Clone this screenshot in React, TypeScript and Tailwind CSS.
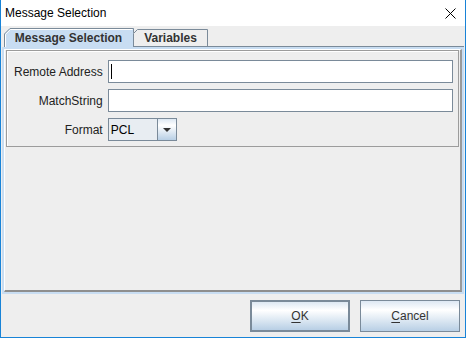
/* Java Swing style "Message Selection" dialog */

function CloseIcon() {
  return (
    <svg width="11" height="11" viewBox="0 0 11 11" className="block">
      <path d="M0.5 0.5 L10.5 10.5 M10.5 0.5 L0.5 10.5" stroke="#000" strokeWidth="1" />
    </svg>
  );
}

function SelectedTab({ label }: { label: string }) {
  return (
    <div className="relative w-[130px] h-[19px] flex items-center justify-center font-bold text-[#333333]">
      <svg width="130" height="19" className="absolute inset-0">
        <polygon points="0,19 0,6 6,0 130,0 130,19" fill="#c8ddf2" />
        <polyline points="0.5,19 0.5,6 6,0.5 129.5,0.5 129.5,19" fill="none" stroke="#7a8a99" />
        <polyline points="1.5,19 1.5,6.4 6.4,1.5 128.5,1.5" fill="none" stroke="#ffffff" />
      </svg>
      <span className="relative pr-[1px]">{label}</span>
    </div>
  );
}

function Tab({ label }: { label: string }) {
  return (
    <div className="relative w-[75px] h-[18px] -ml-px flex items-center justify-center font-bold text-[#333333]">
      <svg width="75" height="18" className="absolute inset-0">
        <polygon points="0,18 0,4.5 4.5,0 75,0 75,18" fill="#eeeeee" />
        <polyline points="0.5,18 0.5,4.5 4.5,0.5 74.5,0.5 74.5,18" fill="none" stroke="#7a8a99" />
        <line x1="0" y1="17.5" x2="75" y2="17.5" stroke="#7a8a99" />
      </svg>
      <span className="relative">{label}</span>
    </div>
  );
}

function TextField({ caret }: { caret?: boolean }) {
  return (
    <div className="h-[23px] bg-white border border-[#7a8a99] flex items-center pl-[2px]">
      {caret && <div className="w-px h-[15px] bg-black" />}
    </div>
  );
}

function Combo({ value }: { value: string }) {
  return (
    <div className="w-[69px] h-[23px] flex border border-[#7a8a99] justify-self-start">
      <div className="flex-1 flex items-center pl-[2px] bg-[#e8edf2] text-black">{value}</div>
      <div className="w-[19px] flex items-center justify-center border-l border-[#7a8a99] bg-[linear-gradient(to_bottom,#dde8f3_0%,#ffffff_30%,#b8cfe5_100%)]">
        <svg width="8" height="4" viewBox="0 0 8 4" className="block">
          <polygon points="0,0 8,0 4,4" fill="#333333" />
        </svg>
      </div>
    </div>
  );
}

function Button({ first, rest, focused }: { first: string; rest: string; focused?: boolean }) {
  return (
    <button
      className={`w-[100px] h-[32px] flex items-center justify-center text-[#333333] bg-[linear-gradient(to_bottom,#dde8f3_0%,#ffffff_30%,#b8cfe5_100%)] ${
        focused ? "border-2 border-[#7a8a99]" : "border border-[#7a8a99]"
      }`}
    >
      <span>
        <span className="underline underline-offset-2">{first}</span>
        {rest}
      </span>
    </button>
  );
}

export default function App() {
  return (
    <div className="w-[466px] h-[338px] flex flex-col border-x border-b border-[#1883d7] bg-[#eeeeee] font-['Liberation_Sans',Arial,sans-serif] text-[12px] leading-none">
      {/* title bar */}
      <div className="h-[26px] shrink-0 bg-white flex items-center justify-between pl-[4px] pr-[9px]">
        <span className="text-black">Message Selection</span>
        <CloseIcon />
      </div>

      {/* tabs */}
      <div className="h-[21px] shrink-0 flex items-end pl-[2px] ml-px mr-px">
        <SelectedTab label="Message Selection" />
        <Tab label="Variables" />
        <div className="flex-1 h-full border-b border-[#7a8a99]" />
      </div>

      {/* tab content */}
      <div className="h-[247px] shrink-0 mx-px border-2 border-[#c8ddf2] flex flex-col">
        <div className="flex-1 flex flex-col border-l border-t border-white border-r-2 border-b-2 border-r-[#9a9a9a] border-b-[#8e8e8e] pl-px pr-px">
          <div className="border border-[#9c9c9c] shadow-[inset_1px_1px_0_#ffffff] pt-[9px] pb-[5px] pl-[7px] pr-[5px] grid grid-cols-[max-content_1fr] gap-x-[5px] gap-y-[6px] items-center text-[#222222]">
            <span className="text-right">Remote Address</span>
            <TextField caret />
            <span className="text-right">MatchString</span>
            <TextField />
            <span className="text-right">Format</span>
            <Combo value="PCL" />
          </div>
        </div>
      </div>

      {/* buttons */}
      <div className="flex-1 flex justify-end items-start gap-[10px] pt-[6px] pr-[5px]">
        <Button first="O" rest="K" focused />
        <Button first="C" rest="ancel" />
      </div>
    </div>
  );
}
